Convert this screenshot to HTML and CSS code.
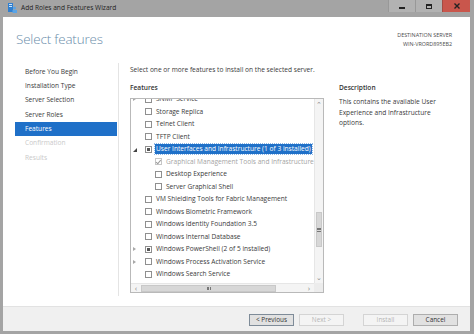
FILE: index.html
```html
<!DOCTYPE html>
<html lang="en">
<head>
  <meta charset="UTF-8">
  <title>Add Roles and Features Wizard</title>
  <link rel="stylesheet" href="styles.css">
</head>
<body>

<div class="window">
  <div class="titlebar">
    <svg class="app-icon" width="9" height="10" viewBox="0 0 9 10">
      <rect x="0" y="0" width="5" height="9" fill="#2f7fd0"/>
      <rect x="1" y="1" width="3" height="1" fill="#cfe4f8"/>
      <rect x="1" y="3" width="3" height="1" fill="#cfe4f8"/>
      <circle cx="6.5" cy="5" r="1.5" fill="#5aa4e6"/>
      <rect x="4.5" y="7" width="4.5" height="3" fill="#5aa4e6"/>
    </svg>
    <span class="title">Add Roles and Features Wizard</span>
    <div class="caption-buttons">
      <div class="cap-btn"><span class="glyph-min"></span></div>
      <div class="cap-btn"><span class="glyph-max"></span></div>
      <div class="cap-btn close">
        <svg width="6" height="6" viewBox="0 0 6 6"><path d="M0.5 0.5 L5.5 5.5 M5.5 0.5 L0.5 5.5" stroke="#222" stroke-width="1.4"/></svg>
      </div>
    </div>
  </div>

  <div class="client">
    <div class="header">
      <h1 class="page-title">Select features</h1>
      <div class="destination">
        <div>DESTINATION SERVER</div>
        <div>WIN-VRORD895EB2</div>
      </div>
    </div>

    <div class="body">
      <ul class="steps">
        <li>Before You Begin</li>
        <li>Installation Type</li>
        <li>Server Selection</li>
        <li>Server Roles</li>
        <li class="active">Features</li>
        <li class="disabled">Confirmation</li>
        <li class="disabled">Results</li>
      </ul>

      <div class="main">
        <p class="intro">Select one or more features to install on the selected server.</p>
        <div class="columns">
          <div class="features-col">
            <div class="col-label">Features</div>
            <div class="tree">
              <div class="tree-view">
                <div class="rows">
                  <div class="row"><span class="twisty closed"></span><span class="cb"></span><span class="label">SNMP Service</span></div>
                  <div class="row"><span class="twisty"></span><span class="cb"></span><span class="label">Storage Replica</span></div>
                  <div class="row"><span class="twisty"></span><span class="cb"></span><span class="label">Telnet Client</span></div>
                  <div class="row"><span class="twisty"></span><span class="cb"></span><span class="label">TFTP Client</span></div>
                  <div class="row"><span class="twisty open"></span><span class="cb partial"></span><span class="label selected">User Interfaces and Infrastructure (1 of 3 installed)</span></div>
                  <div class="row child installed"><span class="twisty"></span><span class="cb checked"></span><span class="label">Graphical Management Tools and Infrastructure</span></div>
                  <div class="row child"><span class="twisty"></span><span class="cb"></span><span class="label">Desktop Experience</span></div>
                  <div class="row child"><span class="twisty"></span><span class="cb"></span><span class="label">Server Graphical Shell</span></div>
                  <div class="row"><span class="twisty"></span><span class="cb"></span><span class="label">VM Shielding Tools for Fabric Management</span></div>
                  <div class="row"><span class="twisty"></span><span class="cb"></span><span class="label">Windows Biometric Framework</span></div>
                  <div class="row"><span class="twisty"></span><span class="cb"></span><span class="label">Windows Identity Foundation 3.5</span></div>
                  <div class="row"><span class="twisty"></span><span class="cb"></span><span class="label">Windows Internal Database</span></div>
                  <div class="row"><span class="twisty closed"></span><span class="cb partial"></span><span class="label">Windows PowerShell (2 of 5 installed)</span></div>
                  <div class="row"><span class="twisty closed"></span><span class="cb"></span><span class="label">Windows Process Activation Service</span></div>
                  <div class="row"><span class="twisty"></span><span class="cb"></span><span class="label">Windows Search Service</span></div>
                </div>
              </div>
              <div class="vscroll">
                <div class="arrow">&#8963;</div>
                <div class="track">
                  <div class="thumb"><span class="grip-v"></span></div>
                </div>
                <div class="arrow">&#8964;</div>
              </div>
              <div class="hscroll">
                <div class="arrow">&#8249;</div>
                <div class="track">
                  <div class="thumb"><span class="grip-h"></span></div>
                </div>
                <div class="arrow">&#8250;</div>
              </div>
              <div class="corner"></div>
            </div>
          </div>

          <div class="desc-col">
            <div class="col-label">Description</div>
            <p class="desc">This contains the available User Experience and Infrastructure options.</p>
          </div>
        </div>
      </div>
    </div>

    <div class="footer">
      <button class="btn default">&lt; Previous</button>
      <button class="btn" disabled>Next &gt;</button>
      <button class="btn install" disabled>Install</button>
      <button class="btn">Cancel</button>
    </div>
  </div>
</div>

</body>
</html>
```

FILE: styles.css
```css
* {
  box-sizing: border-box;
}

body {
  margin: 0;
  font-family: "Open Sans", "Noto Sans", sans-serif;
  color: #3a3a3a;
}

.window {
  width: 474px;
  height: 334px;
  display: flex;
  flex-direction: column;
  background-color: #a4a4a4;
  padding: 0 4px 3px 3px;
}

/* title bar */
.titlebar {
  height: 17px;
  display: flex;
  align-items: flex-start;
  flex-shrink: 0;
}

.app-icon {
  margin: 3px 0 0 5px;
}

.title {
  margin: 2px 0 0 4px;
  font-size: 6.6px;
  line-height: 12px;
  color: #1e1e1e;
}

.caption-buttons {
  margin-left: auto;
  display: flex;
  height: 12px;
}

.cap-btn {
  width: 27px;
  height: 12px;
  display: flex;
  align-items: center;
  justify-content: center;
  background-color: #b2b2b2;
  border-left: 1px solid #989898;
}

.cap-btn.close {
  width: 28px;
  background-color: #c9564c;
  border-left-color: #a44a42;
}

.glyph-min {
  width: 6px;
  height: 2px;
  margin-top: 3px;
  background-color: #222;
}

.glyph-max {
  width: 6px;
  height: 5px;
  border: 1px solid #222;
  border-top-width: 2px;
}

/* client area */
.client {
  flex: 1;
  display: flex;
  flex-direction: column;
  background-color: #fff;
}

.header {
  height: 40px;
  display: flex;
  justify-content: space-between;
  padding: 0 18px 0 13px;
  flex-shrink: 0;
}

.page-title {
  margin: 13px 0 0;
  font-size: 13.4px;
  font-weight: 300;
  letter-spacing: -0.15px;
  line-height: 18px;
  color: #6a8daa;
}

.destination {
  margin-top: 14px;
  text-align: right;
  font-size: 5.4px;
  line-height: 8.5px;
  color: #4a4a4a;
}

.body {
  flex: 1;
  display: flex;
  min-height: 0;
}

/* step list */
.steps {
  list-style: none;
  margin: 6px 0 10px;
  padding: 1.5px 0 0 12px;
  width: 116px;
  border-right: 1px solid #e4e4e4;
  flex-shrink: 0;
}

.steps li {
  width: 102px;
  height: 14.4px;
  line-height: 14.4px;
  padding-left: 10px;
  font-size: 6.6px;
  color: #3a3a3a;
}

.steps li.active {
  background-color: #1f70c8;
  color: #fff;
}

.steps li.disabled {
  color: #c9c9c9;
}

/* main pane */
.main {
  flex: 1;
  padding: 8px 0 0 11px;
}

.intro {
  margin: 0;
  font-size: 6.6px;
  line-height: 10px;
}

.columns {
  display: flex;
  gap: 15px;
  margin-top: 8px;
}

.col-label {
  font-size: 6.6px;
  font-weight: 600;
  line-height: 10px;
  color: #333;
}

.features-col {
  width: 194px;
}

.desc-col {
  width: 118px;
}

.desc {
  margin: 4px 0 0;
  font-size: 6.6px;
  line-height: 10.5px;
}

/* tree list box */
.tree {
  margin-top: 5px;
  height: 195px;
  border: 1px solid #b9b9b9;
  display: grid;
  grid-template-columns: 1fr 9px;
  grid-template-rows: 1fr 9px;
}

.tree-view {
  overflow: hidden;
}

.rows {
  margin-top: -6px;
}

.row {
  height: 12.5px;
  display: flex;
  align-items: center;
  padding-left: 2px;
  white-space: nowrap;
  font-size: 6.6px;
}

.row.child {
  padding-left: 12px;
}

.twisty {
  width: 12px;
  flex-shrink: 0;
  display: flex;
}

.twisty.closed::before {
  content: "";
  border-left: 3px solid #a8a8a8;
  border-top: 2.5px solid transparent;
  border-bottom: 2.5px solid transparent;
}

.twisty.open::before {
  content: "";
  margin-top: 1px;
  border-right: 4px solid #444;
  border-top: 4px solid transparent;
}

.cb {
  width: 7px;
  height: 7px;
  flex-shrink: 0;
  margin-right: 4px;
  border: 1px solid #8f8f8f;
  background-color: #fff;
  display: flex;
  align-items: center;
  justify-content: center;
}

.cb.partial::before {
  content: "";
  width: 3px;
  height: 3px;
  background-color: #555;
}

.cb.checked::before {
  content: "";
  width: 2px;
  height: 3.5px;
  margin-top: -1px;
  border-right: 1px solid #9a9a9a;
  border-bottom: 1px solid #9a9a9a;
  transform: rotate(40deg);
}

.row.installed .cb {
  border-color: #c6c6c6;
}

.row.installed .label {
  color: #a4a4a4;
}

.label {
  line-height: 10px;
}

.label.selected {
  padding: 0 1px;
  margin-left: -1px;
  background-color: #1f70c8;
  color: #fff;
  outline: 1px dotted #8fb8e6;
}

/* scroll bars */
.vscroll {
  display: flex;
  flex-direction: column;
  border-left: 1px solid #e6e6e6;
  background-color: #f4f4f4;
}

.vscroll .arrow {
  height: 11px;
  font-size: 7px;
  line-height: 11px;
  text-align: center;
  color: #8a8a8a;
}

.vscroll .track {
  flex: 1;
  padding-top: 102px;
}

.vscroll .thumb {
  height: 35px;
  margin: 0 1px;
  background-color: #d7d7d7;
  border: 1px solid #c8c8c8;
  display: flex;
  align-items: center;
  justify-content: center;
}

.grip-v {
  width: 4px;
  height: 4px;
  border-top: 1px solid #777;
  border-bottom: 1px solid #777;
  background: linear-gradient(#777, #777) center / 4px 1px no-repeat;
}

.hscroll {
  display: flex;
  border-top: 1px solid #e6e6e6;
  background-color: #f4f4f4;
}

.hscroll .arrow {
  width: 10px;
  font-size: 8px;
  line-height: 8px;
  text-align: center;
  color: #8a8a8a;
}

.hscroll .track {
  flex: 1;
  padding-right: 28px;
}

.hscroll .thumb {
  height: 7px;
  margin-top: 0.5px;
  background-color: #d7d7d7;
  border: 1px solid #c8c8c8;
  display: flex;
  align-items: center;
  justify-content: center;
}

.grip-h {
  width: 4px;
  height: 3px;
  border-left: 1px solid #777;
  border-right: 1px solid #777;
  background: linear-gradient(90deg, #777, #777) center / 1px 3px no-repeat;
}

.corner {
  background-color: #ececec;
}

/* footer */
.footer {
  height: 25px;
  flex-shrink: 0;
  display: flex;
  align-items: flex-start;
  justify-content: flex-end;
  gap: 5px;
  padding: 7px 12px 0 0;
  background-color: #f0f0f0;
  border-top: 1px solid #e2e2e2;
}

.btn {
  width: 45px;
  height: 12px;
  padding: 0;
  font-family: inherit;
  font-size: 6.4px;
  line-height: 10px;
  color: #333;
  background-color: #e1e1e1;
  border: 1px solid #adadad;
}

.btn.default {
  border-color: #7e8b98;
}

.btn:disabled {
  color: #b4b4b4;
  background-color: #f4f4f4;
  border-color: #d4d4d4;
}

.btn.install {
  margin-left: 14px;
}
```
